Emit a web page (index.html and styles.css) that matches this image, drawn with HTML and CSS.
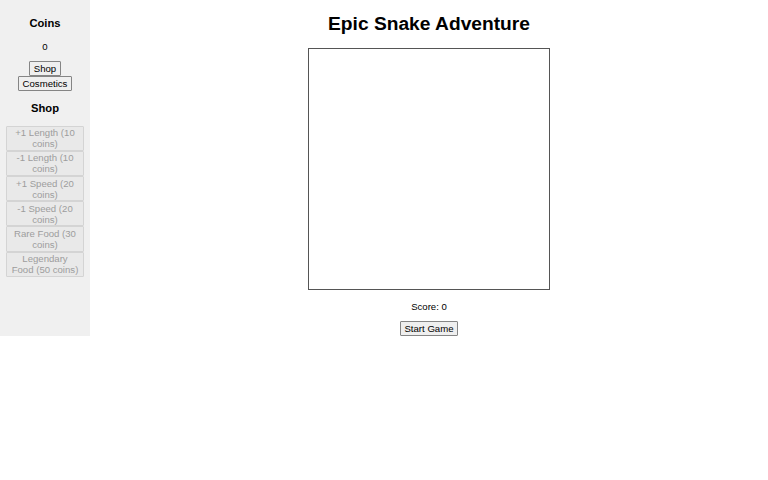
FILE: index.html
```html
<!DOCTYPE html>
<html lang="en">
<head>
    <meta charset="UTF-8">
    <title>Epic Snake Adventure</title>
    <link rel="stylesheet" href="styles.css">
</head>
<body>
    <div class="layout">
        <div class="sidebar">
            <h3>Coins</h3>
            <p class="coins">0</p>
            <button class="btn">Shop</button>
            <button class="btn">Cosmetics</button>

            <h3>Shop</h3>
            <div class="shop-list">
                <button class="btn shop-item" disabled>+1 Length (10 coins)</button>
                <button class="btn shop-item" disabled>-1 Length (10 coins)</button>
                <button class="btn shop-item" disabled>+1 Speed (20 coins)</button>
                <button class="btn shop-item" disabled>-1 Speed (20 coins)</button>
                <button class="btn shop-item" disabled>Rare Food (30 coins)</button>
                <button class="btn shop-item" disabled>Legendary Food (50 coins)</button>
            </div>
        </div>

        <div class="game">
            <h1>Epic Snake Adventure</h1>
            <canvas id="board" width="240" height="240"></canvas>
            <p class="score">Score: 0</p>
            <button class="btn">Start Game</button>
        </div>
    </div>
</body>
</html>
```

FILE: styles.css
```css
* {
    box-sizing: border-box;
}

body {
    margin: 0;
    font-family: "Liberation Sans", Arial, sans-serif;
    font-size: 9.6px;
    color: #000;
    background: #fff;
}

.layout {
    display: flex;
}

.sidebar {
    width: 90px;
    padding: 6px;
    background: #f0f0f0;
    display: flex;
    flex-direction: column;
    align-items: center;
    text-align: center;
}

.sidebar h3 {
    font-size: 11.2px;
    line-height: 13px;
    margin: 11px 0;
}

.coins {
    margin: 0 0 8.6px;
    line-height: 11px;
}

.btn {
    font-family: "Liberation Sans", Arial, sans-serif;
    font-size: 9.6px;
    line-height: 11px;
    padding: 1px 3.6px;
    color: #000;
    background: #efefef;
    border: 1px solid #858585;
    border-radius: 1px;
}

.shop-list {
    display: flex;
    flex-direction: column;
    width: 78px;
}

.shop-item {
    width: 100%;
    padding: 0.6px 4px;
    color: #9d9d9d;
    background: #e9e9e9;
    border-color: #d4d4d4;
}

.game {
    flex: 1;
    display: flex;
    flex-direction: column;
    align-items: center;
}

.game h1 {
    font-size: 19.2px;
    line-height: 22px;
    margin: 12.9px 0;
}

#board {
    border: 1px solid #555;
    display: block;
}

.score {
    margin: 11.6px 0 8.6px;
    line-height: 11px;
}
```
